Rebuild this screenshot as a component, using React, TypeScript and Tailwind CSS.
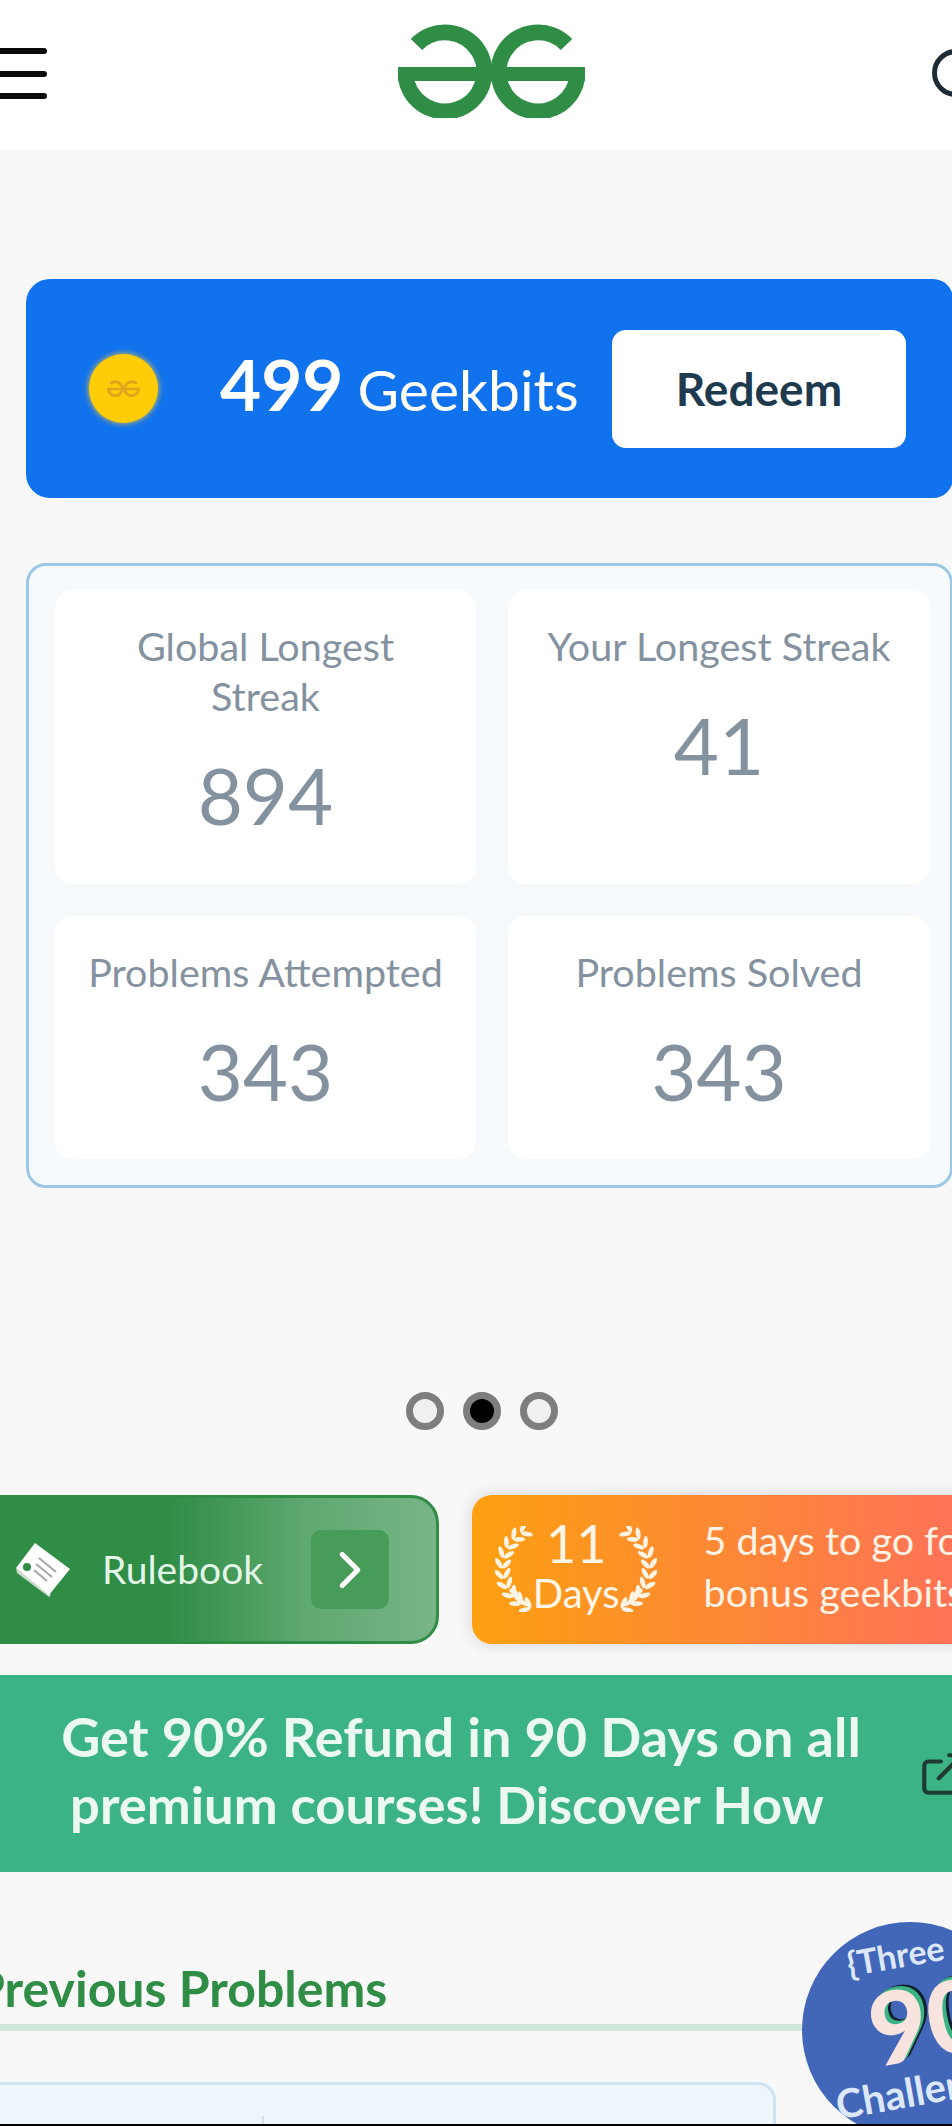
import { ChevronRight, ExternalLink } from 'lucide-react';

const stats = [
  { label: 'Global Longest Streak', value: '894', labelClass: 'w-[300px]' },
  { label: 'Your Longest Streak', value: '41', labelClass: 'w-[400px]' },
  { label: 'Problems Attempted', value: '343', labelClass: 'w-[400px]' },
  { label: 'Problems Solved', value: '343', labelClass: 'w-[400px]' },
];

function Logo({ color, className }: { color: string; className: string }) {
  return (
    <svg viewBox="0 0 187 94" className={className} fill="none">
      <rect x="0" y="43" width="187" height="14" fill={color} />
      <path d="M18.5 20.5A39.5 39.5 0 1 1 7.5 50" stroke={color} strokeWidth="16" />
      <path d="M168.5 20.5A39.5 39.5 0 1 0 179.5 50" stroke={color} strokeWidth="16" />
    </svg>
  );
}

function Laurel() {
  const angles = [116, 130, 144, 158, 172, 186, 200, 214, 228, 242];
  const leaves = angles.flatMap((a) => {
    const rad = (a * Math.PI) / 180;
    const ox = 50 + 46.5 * Math.cos(rad);
    const oy = 42 + 46.5 * Math.sin(rad);
    const ix = 50 + 38.5 * Math.cos(rad);
    const iy = 42 + 38.5 * Math.sin(rad);
    return [
      { x: ox, y: oy, r: a + 90 - 38 },
      { x: ix, y: iy, r: a + 90 + 38 },
    ];
  });
  const left = (
    <g fill="#fff4e4">
      {leaves.map((l, i) => (
        <ellipse key={i} cx={l.x} cy={l.y} rx="6" ry="2.4" transform={`rotate(${l.r} ${l.x} ${l.y})`} />
      ))}
      <path d="M14 64Q22 80 36 81Q26 74 19 60Z" />
    </g>
  );
  return (
    <svg viewBox="0 0 162 86" className="absolute left-[23px] top-[31px] h-[86px] w-[162px]">
      {left}
      <g transform="translate(162 0) scale(-1 1)">{left}</g>
    </svg>
  );
}

function Paper() {
  return (
    <svg viewBox="0 0 60 60" className="h-[60px] w-[60px] shrink-0">
      <path d="M2 28L3 33L35 57L37 55Z" fill="#c9dccd" />
      <path d="M21 3L2 28L35 55L56 29Z" fill="#fff" />
      <circle cx="13" cy="27" r="4" fill="#2f8d46" />
      <path d="M25 18L42 32M22 24L38 37M20 30L33 41" stroke="#9fa8a2" strokeWidth="2" />
    </svg>
  );
}

export default function App() {
  return (
    <div className="relative flex h-[2126px] w-[952px] flex-col overflow-hidden bg-[#f8f8f8] font-['Lato','Noto_Sans',sans-serif]">
      <header className="flex h-[150px] shrink-0 items-center bg-white">
        <div className="mb-[3px] flex h-[51px] w-[47px] shrink-0 flex-col justify-between">
          <span className="h-[6px] rounded-r-full bg-[#0b0b0b]" />
          <span className="h-[6px] rounded-r-full bg-[#0b0b0b]" />
          <span className="h-[6px] rounded-r-full bg-[#0b0b0b]" />
        </div>
        <Logo color="#2f8d46" className="mb-[8px] ml-[351px] h-[94px] w-[187px] shrink-0" />
        <div className="mb-[4px] ml-[347px] h-[48px] w-[48px] shrink-0 rounded-full border-[5px] border-[#1d2b36]" />
      </header>

      <section className="ml-[26px] mt-[129px] flex h-[219px] w-[927px] shrink-0 items-center rounded-l-[24px] rounded-r-[20px] bg-[#1172ee]">
        <div className="ml-[63px] flex h-[69px] w-[69px] shrink-0 items-center justify-center rounded-full bg-[#ffcc08] shadow-[0_0_6px_#f5c92e]">
          <Logo color="#dfa51c" className="h-[17px] w-[33px]" />
        </div>
        <div className="mb-[10px] ml-[62px] flex w-[392px] shrink-0 items-baseline whitespace-nowrap text-white">
          <span className="text-[71px] leading-none font-bold">499</span>
          <span className="ml-[14px] text-[57px] leading-none">Geekbits</span>
        </div>
        <button type="button" className="h-[118px] w-[294px] shrink-0 rounded-[14px] bg-white text-[46px] font-bold text-[#1e3a4f]">
          Redeem
        </button>
      </section>

      <section className="ml-[26px] mt-[65px] grid h-[625px] w-[927px] shrink-0 grid-cols-[421px_422px] grid-rows-[294px_243px] gap-x-[32px] gap-y-[32px] rounded-[20px] border-[3px] border-[#9cc8e8] bg-[#f7fafd] pl-[26px] pt-[24px]">
        {stats.map((stat) => (
          <div key={stat.label + stat.value} className="flex flex-col items-center rounded-[18px] bg-white pt-[31px] text-[#84929f]">
            <p className={`${stat.labelClass} text-center text-[39.5px] leading-[50px]`}>{stat.label}</p>
            <p className="mt-[34px] text-[78px] leading-[80px]">{stat.value}</p>
          </div>
        ))}
      </section>

      <div className="ml-[406px] mt-[204px] flex shrink-0 gap-[19px]">
        <span className="h-[38px] w-[38px] rounded-full border-[7px] border-[#7f7d80] bg-[#f0f0f0]" />
        <span className="h-[38px] w-[38px] rounded-full border-[7px] border-[#7f7d80] bg-black" />
        <span className="h-[38px] w-[38px] rounded-full border-[7px] border-[#7f7d80] bg-[#f0f0f0]" />
      </div>

      <div className="mt-[65px] flex shrink-0">
        <div className="ml-[-30px] flex h-[149px] w-[469px] shrink-0 items-center rounded-[28px] border-[3px] border-[#2f8d46] bg-[linear-gradient(90deg,#2f8d46_0%,#2f8d46_42%,#5fa871_72%,#78b587_100%)] pl-[41px]">
          <Paper />
          <span className="ml-[28px] w-[209px] text-[39px] text-[#e3f6e8]">Rulebook</span>
          <div className="flex h-[79px] w-[78px] items-center justify-center rounded-[10px] bg-[#479c59]">
            <ChevronRight size={62} strokeWidth={2} color="#fff" />
          </div>
        </div>
        <div className="relative ml-[33px] flex h-[149px] w-[560px] shrink-0 items-center rounded-[20px] bg-[linear-gradient(90deg,#fca011,#ff6b62)] shadow-[0_0_16px_rgba(90,90,110,0.22)]">
          <Laurel />
          <div className="mb-[10px] ml-[52px] flex w-[105px] flex-col items-center text-[#fff6e8]">
            <span className="text-[52px] leading-[56px]">11</span>
            <span className="text-[40px] leading-[44px]">Days</span>
          </div>
          <p className="mb-[8px] ml-[75px] w-[330px] whitespace-nowrap text-[39.5px] leading-[52px] text-[#fff3e4]">
            5 days to go for
            <br />
            bonus geekbits
          </p>
        </div>
      </div>

      <div className="ml-[-30px] mt-[31px] flex h-[197px] w-[1030px] shrink-0 items-center rounded-[14px] bg-[#3cb384] pl-[76px]">
        <p className="mb-[8px] w-[830px] text-center font-bold whitespace-nowrap text-[#ecf9f2]">
          <span className="block text-[54px] leading-[67px]">Get 90% Refund in 90 Days on all</span>
          <span className="block pr-[28px] text-[52.5px] leading-[67px]">premium courses! Discover How</span>
        </p>
        <ExternalLink className="ml-[42px] shrink-0" size={50} strokeWidth={2} color="#1d3b33" />
      </div>

      <h2 className="ml-[-26px] mt-[84px] shrink-0 text-[50px] leading-[64px] font-bold text-[#2f8d46]">Previous Problems</h2>
      <div className="mt-[4px] h-[7px] w-[810px] shrink-0 bg-[#d3e6da]" />

      <div className="ml-[-30px] mt-[51px] flex w-[806px] flex-1 items-end rounded-t-[18px] border-[3px] border-b-0 border-[#cfe4f3] bg-[#eef6fc] pl-[289px]">
        <div className="h-[8px] w-[2px] bg-[#cfe4f3]" />
      </div>
      <div className="relative z-10 h-[2px] w-full shrink-0 bg-black" />

      <div className="absolute left-[802px] top-[1922px] h-[216px] w-[216px] overflow-hidden rounded-full bg-[#4266b8]">
        <div className="flex origin-top-left rotate-[-10deg] flex-col">
          <span className="ml-[37px] mt-[27px] text-[34px] leading-[44px] font-bold whitespace-nowrap text-[#dde7fa]">{'{Three'}</span>
          <span className="ml-[48px] mt-[0px] text-[100px] leading-[92px] font-black whitespace-nowrap text-[#f9e3df] [text-shadow:4px_-3px_0_#3cb384,7px_-4px_0_#10202c]">90</span>
          <span className="ml-[2px] mt-[1px] text-[40px] leading-[44px] font-bold whitespace-nowrap text-[#dde7fa]">Challenge</span>
        </div>
      </div>
    </div>
  );
}
